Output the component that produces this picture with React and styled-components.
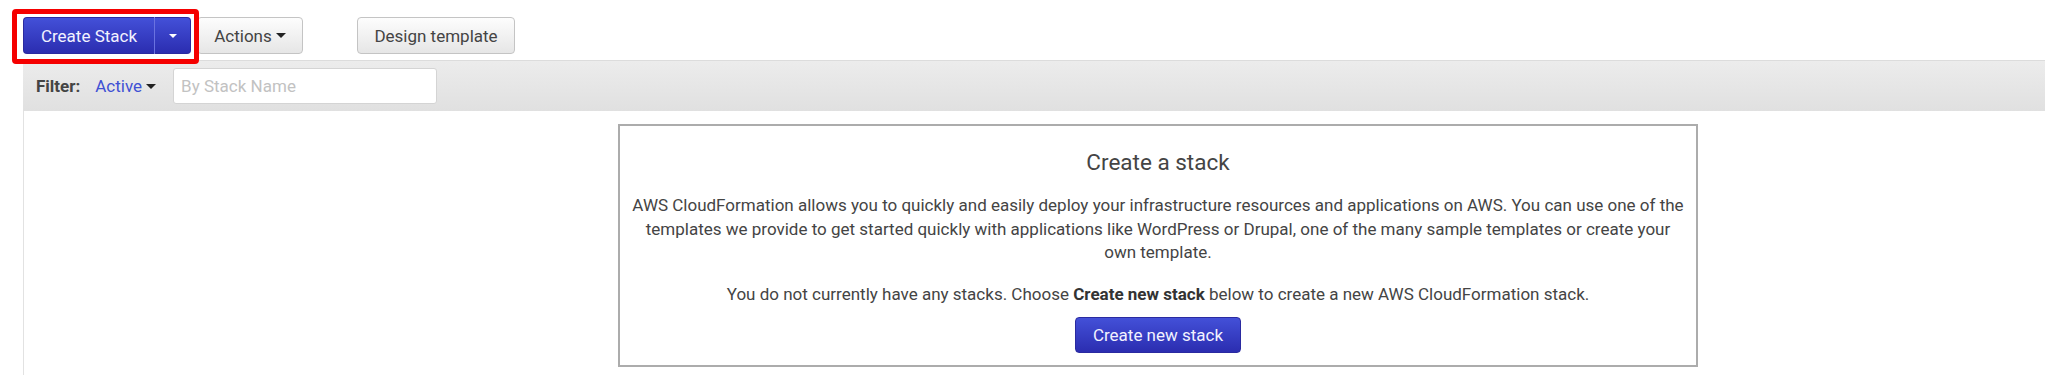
import React from "react";
import styled, { createGlobalStyle } from "styled-components";

const Global = createGlobalStyle`
  html, body { margin: 0; padding: 0; background: #fff; }
  body { font-family: Roboto, "Liberation Sans", Arial, sans-serif; color: #444; }
  * { box-sizing: border-box; }
`;

const Page = styled.div`
  width: 2048px;
  height: 375px;
  overflow: hidden;
  display: flex;
  flex-direction: column;
`;

const Toolbar = styled.div`
  height: 60px;
  display: flex;
  align-items: flex-start;
  padding: 17px 0 0 23px;
`;

const Highlight = styled.div`
  position: relative;
  display: flex;
  &::after {
    content: "";
    position: absolute;
    left: -11px;
    top: -8px;
    right: -8px;
    bottom: -10px;
    border: 5px solid #f50000;
    border-radius: 4px;
    pointer-events: none;
  }
`;

const BlueBtn = styled.button`
  height: 37px;
  padding: 0;
  border: 1px solid #2a2aa0;
  background: linear-gradient(#4350d8, #2b2db0);
  color: #f2f2ff;
  font-family: Roboto, "Liberation Sans", Arial, sans-serif;
  font-size: 17px;
  white-space: nowrap;
  display: flex;
  align-items: center;
  justify-content: center;
  border-radius: ${(p) => p.$radius || "4px"};
  cursor: pointer;
`;

const SplitMain = styled(BlueBtn)`
  width: 132px;
  border-right: 1px solid #6a72e0;
`;

const SplitCaret = styled(BlueBtn)`
  width: 36px;
  border-left: none;
`;

const GrayBtn = styled.button`
  height: 37px;
  width: ${(p) => p.$w}px;
  margin-left: ${(p) => p.$ml || 0}px;
  border: 1px solid #c4c4c4;
  border-radius: 4px;
  background: linear-gradient(#fdfdfd, #e6e6e6);
  color: #444;
  font-family: Roboto, "Liberation Sans", Arial, sans-serif;
  font-size: 17px;
  white-space: nowrap;
  display: flex;
  align-items: center;
  justify-content: center;
  gap: 4px;
  padding: 0;
  cursor: pointer;
`;

const Caret = styled.span`
  display: inline-block;
  width: 0;
  height: 0;
  border-left: ${(p) => p.$s || 5}px solid transparent;
  border-right: ${(p) => p.$s || 5}px solid transparent;
  border-top: ${(p) => p.$s || 5}px solid ${(p) => p.$c || "#222"};
  margin-left: ${(p) => p.$ml || 0}px;
`;

const Main = styled.div`
  flex: 1;
  margin-left: 23px;
  margin-right: 3px;
  border-left: 1px solid #e2e2e2;
  display: flex;
  flex-direction: column;
`;

const FilterBar = styled.div`
  height: 51px;
  margin-left: -1px;
  border-top: 1px solid #dcdcdc;
  background: linear-gradient(#ececec, #e0e0e0);
  display: flex;
  align-items: center;
  padding-left: 13px;
`;

const FilterLabel = styled.span`
  font-weight: 700;
  font-size: 17px;
  color: #444;
`;

const FilterLink = styled.span`
  margin-left: 15px;
  font-size: 17px;
  color: #3f51d4;
  display: flex;
  align-items: center;
`;

const SearchInput = styled.input`
  margin-left: 17px;
  width: 264px;
  height: 36px;
  border: 1px solid #d4d4d4;
  border-radius: 3px;
  background: #fff;
  padding: 0 7px;
  font-family: Roboto, "Liberation Sans", Arial, sans-serif;
  font-size: 17px;
  color: #444;
  outline: none;
  &::placeholder { color: #c2c2c2; }
`;

const Content = styled.div`
  padding: 13px 0 0 594px;
`;

const Card = styled.div`
  width: 1080px;
  height: 243px;
  border: 2px solid #acacac;
  display: flex;
  flex-direction: column;
  align-items: center;
  text-align: center;
  padding: 21px 6px 0;
`;

const Title = styled.h2`
  margin: 0;
  font-weight: 400;
  font-size: 22.5px;
  color: #444;
  line-height: 30px;
`;

const Para = styled.p`
  margin: ${(p) => p.$mt || 0}px 0 0;
  font-size: 17px;
  line-height: 23.5px;
  color: #444;
`;

const Bold = styled.b`
  font-weight: 700;
  color: #333;
`;

const CreateNew = styled(BlueBtn)`
  margin-top: 11px;
  width: 166px;
  height: 36px;
`;

export default function App() {
  return (
    <>
      <Global />
      <Page>
        <Toolbar>
          <Highlight>
            <SplitMain $radius="4px 0 0 4px">Create Stack</SplitMain>
            <SplitCaret $radius="0 4px 4px 0">
              <Caret $s={4} $c="#fff" />
            </SplitCaret>
          </Highlight>
          <GrayBtn $w={106} $ml={6}>
            Actions <Caret $s={5} />
          </GrayBtn>
          <GrayBtn $w={158} $ml={54}>Design template</GrayBtn>
        </Toolbar>
        <Main>
          <FilterBar>
            <FilterLabel>Filter:</FilterLabel>
            <FilterLink>
              Active <Caret $s={5} $ml={4} />
            </FilterLink>
            <SearchInput placeholder="By Stack Name" />
          </FilterBar>
          <Content>
            <Card>
              <Title>Create a stack</Title>
              <Para $mt={17}>
                AWS CloudFormation allows you to quickly and easily deploy your infrastructure resources and
                applications on AWS. You can use one of the templates we provide to get started quickly with
                applications like WordPress or Drupal, one of the many sample templates or create your
                <br />
                own template.
              </Para>
              <Para $mt={18}>
                You do not currently have any stacks. Choose <Bold>Create new stack</Bold> below to create a new AWS
                CloudFormation stack.
              </Para>
              <CreateNew>Create new stack</CreateNew>
            </Card>
          </Content>
        </Main>
      </Page>
    </>
  );
}
